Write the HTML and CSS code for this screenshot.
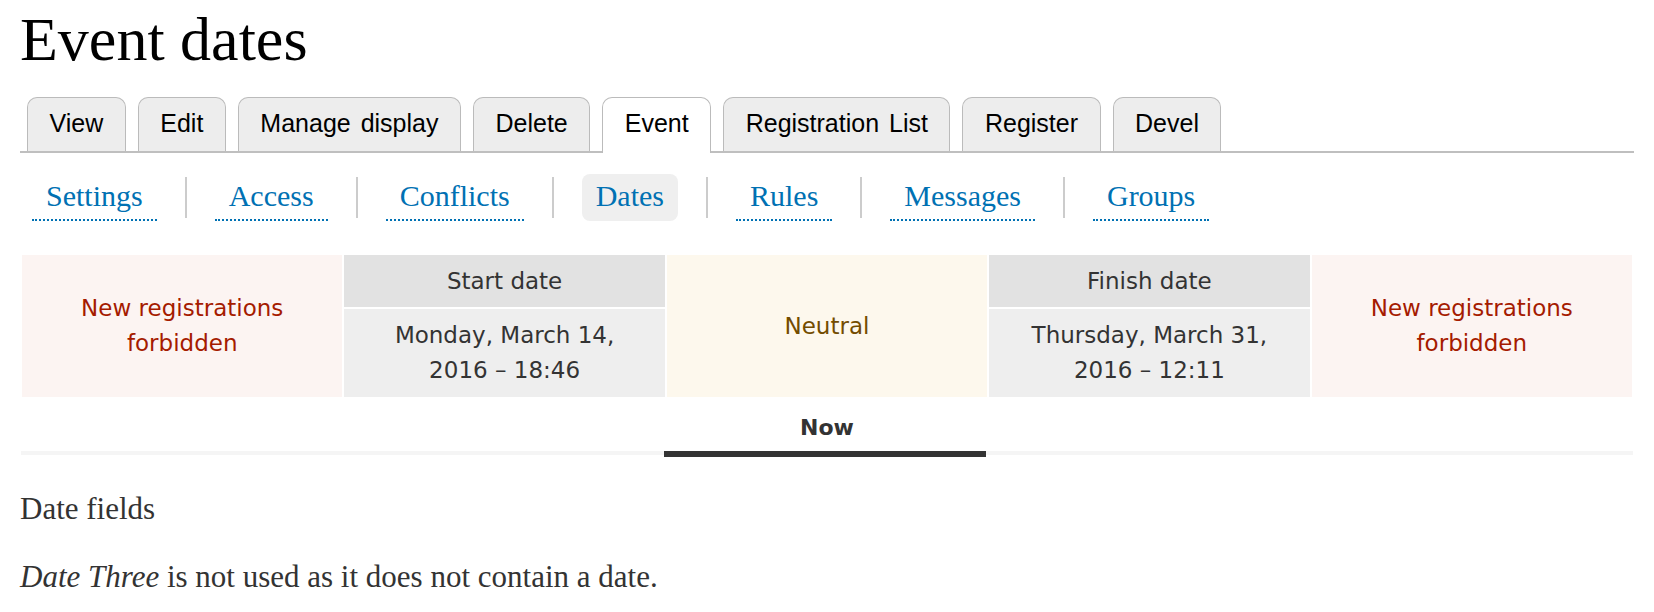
FILE: index.html
```html
<!DOCTYPE html>
<html lang="en">
<head>
<meta charset="utf-8">
<title>Event dates</title>
<link rel="stylesheet" href="styles.css">
</head>
<body>
<div class="page">
  <h1 class="title">Event dates</h1>

  <nav class="primary-nav">
    <ul class="tabs">
      <li><a class="tab" href="#">View</a></li>
      <li><a class="tab" href="#">Edit</a></li>
      <li><a class="tab" href="#">Manage display</a></li>
      <li><a class="tab" href="#">Delete</a></li>
      <li><a class="tab is-active" href="#">Event</a></li>
      <li><a class="tab" href="#">Registration List</a></li>
      <li><a class="tab" href="#">Register</a></li>
      <li><a class="tab" href="#">Devel</a></li>
    </ul>
  </nav>

  <ul class="subtabs">
    <li><a class="subtab" href="#">Settings</a></li>
    <li><a class="subtab" href="#">Access</a></li>
    <li><a class="subtab" href="#">Conflicts</a></li>
    <li><a class="subtab is-active" href="#">Dates</a></li>
    <li><a class="subtab" href="#">Rules</a></li>
    <li><a class="subtab" href="#">Messages</a></li>
    <li><a class="subtab" href="#">Groups</a></li>
  </ul>

  <table class="timeline">
    <tbody>
      <tr>
        <td class="status status-error" rowspan="2">New registrations forbidden</td>
        <th class="date-head">Start date</th>
        <td class="status status-warning" rowspan="2">Neutral</td>
        <th class="date-head">Finish date</th>
        <td class="status status-error" rowspan="2">New registrations forbidden</td>
      </tr>
      <tr>
        <td class="date-value">Monday, March 14,<br>2016 – 18:46</td>
        <td class="date-value">Thursday, March 31,<br>2016 – 12:11</td>
      </tr>
    </tbody>
  </table>

  <div class="now-row">
    <span class="now-label">Now</span>
  </div>
  <div class="track">
    <span class="now-mark"></span>
  </div>

  <h2 class="section-title">Date fields</h2>
  <p class="note"><em>Date Three</em> is not used as it does not contain a date.</p>
</div>
</body>
</html>
```

FILE: styles.css
```css
html, body {
  margin: 0;
  padding: 0;
  background: #ffffff;
}

body {
  font-family: "Liberation Serif", "Times New Roman", serif;
  color: #333333;
}

.page {
  padding: 0 20px;
}

/* Title */
.title {
  margin: 0;
  padding-top: 5px;
  font-family: "Liberation Serif", serif;
  font-weight: 400;
  font-size: 62px;
  line-height: 69px;
  color: #000000;
}

/* Primary tabs */
.tabs {
  list-style: none;
  margin: 23px 0 0;
  padding: 0 0 0 7px;
  display: flex;
  align-items: flex-end;
  gap: 12px;
  border-bottom: 2px solid #bfbfbf;
}

.tabs li {
  display: block;
}

.tab {
  display: block;
  padding: 10px 21.5px 13px;
  font-family: "Liberation Sans", Arial, sans-serif;
  font-size: 25px;
  line-height: 30px;
  word-spacing: 3px;
  color: #000000;
  text-decoration: none;
  background: #ededed;
  border: 1px solid #bbbbbb;
  border-bottom: 0;
  border-radius: 10px 10px 0 0;
}

.tab.is-active {
  background: #ffffff;
  padding-bottom: 15px;
  margin-bottom: -2px;
}

/* Secondary tabs */
.subtabs {
  list-style: none;
  margin: 21px 0 0;
  padding: 0 0 0 12px;
  display: flex;
  align-items: center;
}

.subtabs li {
  display: flex;
  align-items: center;
}

.subtabs li + li::before {
  content: "";
  display: block;
  width: 2px;
  height: 41px;
  background: #cccccc;
  margin: 0 28px;
}

.subtab {
  display: block;
  padding: 4px 14px 5px;
  font-family: "Liberation Serif", serif;
  font-size: 30px;
  line-height: 36px;
  color: #0071b3;
  text-decoration: none;
  border-bottom: 2px dotted #0071b3;
}

.subtab.is-active {
  background: #efefef;
  border-bottom-color: transparent;
  border-radius: 8px;
}

/* Timeline table */
.timeline {
  width: 100%;
  margin-top: 32px;
  border-collapse: separate;
  border-spacing: 2px;
  table-layout: fixed;
}

.timeline td,
.timeline th {
  font-family: "DejaVu Sans", Verdana, sans-serif;
  font-size: 23px;
  line-height: 35px;
  font-weight: 400;
  text-align: center;
  vertical-align: middle;
  padding: 9px 12px;
  color: #333333;
}

.timeline .date-head {
  background: #e2e2e2;
  padding: 9px 12px 8px;
}

.timeline .date-value {
  background: #eeeeee;
}

.timeline .status-error {
  background: #fcf4f2;
  color: #a51b00;
}

.timeline .status-warning {
  background: #fdf8ed;
  color: #734c00;
}

/* Now marker */
.now-row {
  display: grid;
  grid-template-columns: repeat(5, 1fr);
  column-gap: 2px;
  padding: 11px 2px 6px;
}

.now-label {
  grid-column: 3;
  text-align: center;
  font-family: "DejaVu Sans", Verdana, sans-serif;
  font-weight: 700;
  font-size: 22px;
  line-height: 35px;
  color: #333333;
}

.track {
  display: grid;
  grid-template-columns: repeat(5, 1fr);
  grid-template-rows: 4px;
  column-gap: 2px;
  height: 4px;
  margin: 0 1px;
  padding: 0 1px;
  background: #f5f5f5;
}

.now-mark {
  grid-column: 3;
  height: 6px;
  margin: 0 1px 0 -3px;
  background: #333333;
}

/* Date fields */
.section-title {
  margin: 31px 0 0;
  font-family: "Liberation Serif", serif;
  font-weight: 400;
  font-size: 31px;
  line-height: 46.5px;
  color: #333333;
}

.note {
  margin: 21px 0 0;
  font-family: "Liberation Serif", serif;
  font-size: 31px;
  line-height: 46.5px;
  color: #333333;
}
```
